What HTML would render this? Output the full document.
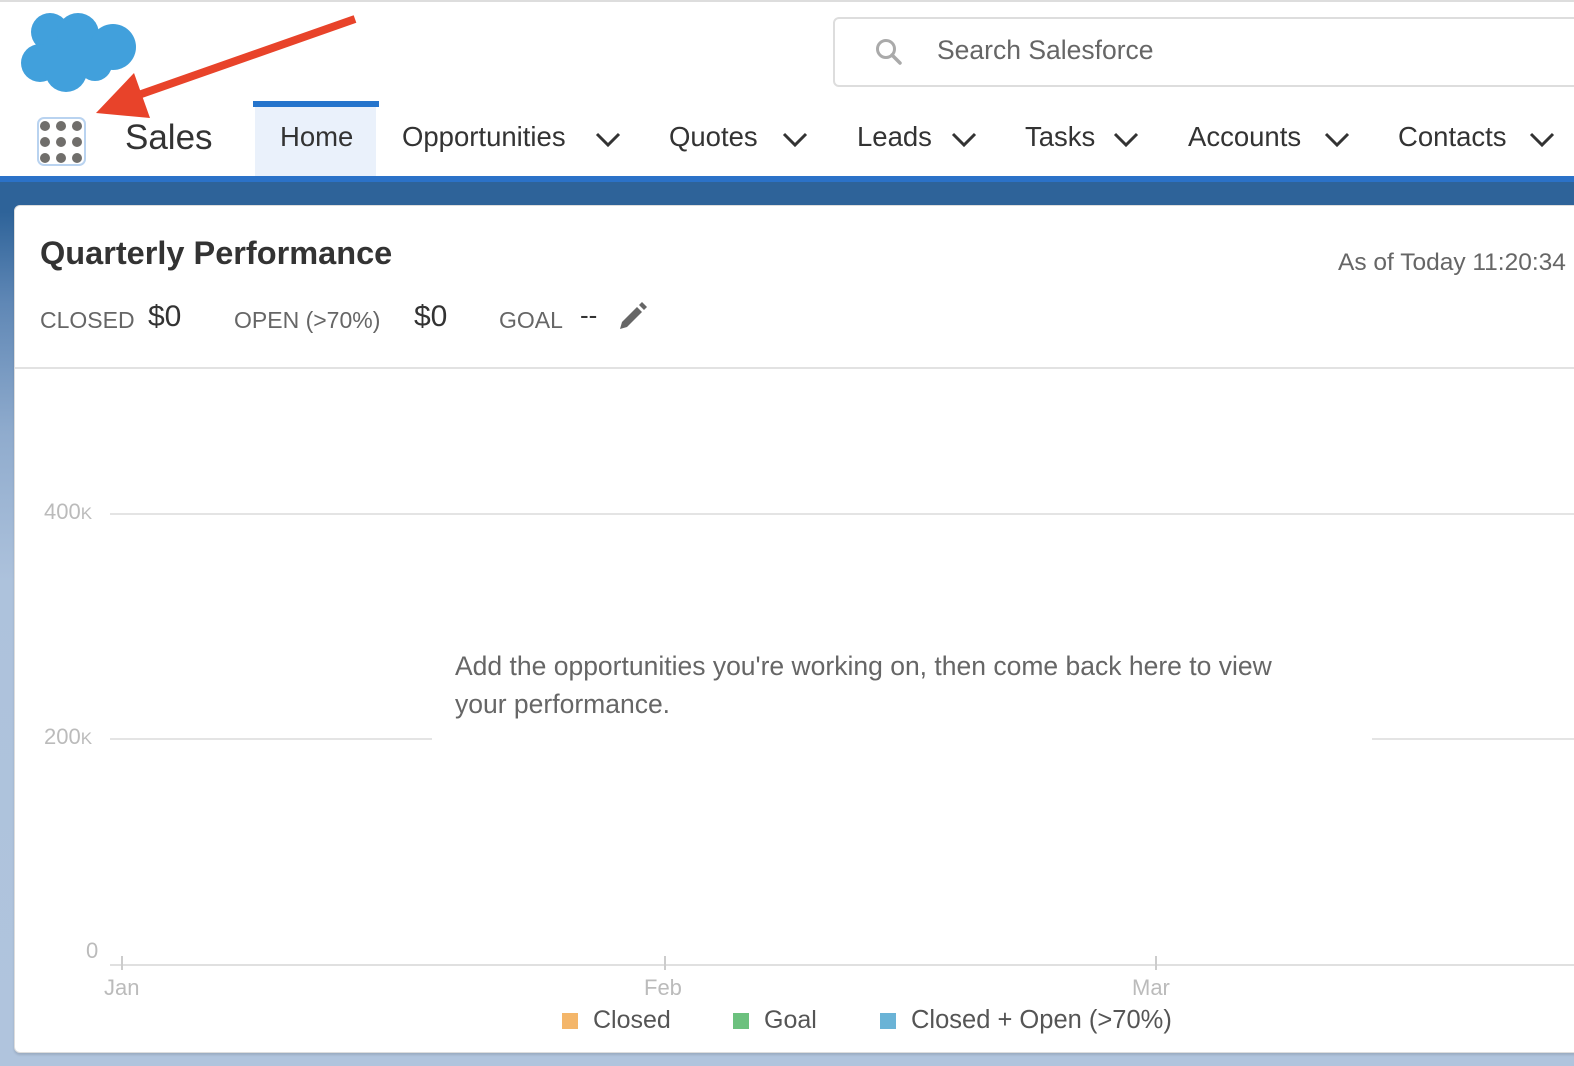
<!DOCTYPE html>
<html><head><meta charset="utf-8"><style>
*{margin:0;padding:0;box-sizing:border-box}
body{width:1574px;height:1066px;overflow:hidden;position:relative;background:#fff;font-family:"Liberation Sans",sans-serif;}
.a{position:absolute;white-space:nowrap}
.nav{font-size:27.5px;color:#333;top:121px}
</style></head><body>
<div class="a" style="left:0;top:0;width:1574px;height:2px;background:#ddd"></div>
<!-- logo -->
<svg class="a" style="left:0;top:0" width="150" height="100">
<g fill="#41a0dc">
<circle cx="50" cy="32" r="19"/><circle cx="78" cy="34" r="21"/><circle cx="113" cy="47" r="23"/>
<circle cx="40" cy="63" r="19"/><circle cx="66" cy="71" r="21"/><circle cx="95" cy="64" r="17"/>
<rect x="45" y="40" width="60" height="30"/></g></svg>
<!-- search -->
<div class="a" style="left:833px;top:17px;width:760px;height:70px;border:2px solid #ddd;border-radius:6px;background:#fff"></div>
<svg class="a" style="left:874px;top:37px" width="30" height="30" viewBox="0 0 30 30"><circle cx="12" cy="12" r="8.5" fill="none" stroke="#aaa" stroke-width="3"/><line x1="18" y1="18" x2="26" y2="26" stroke="#aaa" stroke-width="3.5" stroke-linecap="round"/></svg>
<div class="a" style="left:937px;top:35px;font-size:26.5px;color:#666">Search Salesforce</div>
<!-- launcher -->
<div class="a" style="left:37px;top:117px;width:49px;height:49px;border:2px solid #b9d3f0;border-radius:7px;background:#fff"></div>
<svg class="a" style="left:37px;top:117px" width="49" height="49"><g fill="#706e6b">
<circle cx="8" cy="9" r="5"/><circle cx="24" cy="9" r="5"/><circle cx="40" cy="9" r="5"/>
<circle cx="8" cy="25" r="5"/><circle cx="24" cy="25" r="5"/><circle cx="40" cy="25" r="5"/>
<circle cx="8" cy="41" r="5"/><circle cx="24" cy="41" r="5"/><circle cx="40" cy="41" r="5"/></g></svg>
<div class="a" style="left:125px;top:118px;font-size:35px;color:#333">Sales</div>
<!-- home tab -->
<div class="a" style="left:255px;top:106px;width:121px;height:70px;background:#eaf1fb"></div>
<div class="a" style="left:253px;top:101px;width:126px;height:6px;background:#2574cc"></div>
<div class="a nav" style="left:280px">Home</div>
<div class="a nav" style="left:402px">Opportunities</div>
<div class="a nav" style="left:669px">Quotes</div>
<div class="a nav" style="left:857px">Leads</div>
<div class="a nav" style="left:1025px">Tasks</div>
<div class="a nav" style="left:1188px">Accounts</div>
<div class="a nav" style="left:1398px">Contacts</div>
<svg class="a" style="left:0;top:0" width="1574" height="180"><g fill="none" stroke="#333" stroke-width="3">
<polyline points="597,134 608,145 619,134"/><polyline points="784,134 795,145 806,134"/>
<polyline points="953,134 964,145 975,134"/><polyline points="1115,134 1126,145 1137,134"/>
<polyline points="1326,134 1337,145 1348,134"/><polyline points="1531,134 1542,145 1553,134"/></g></svg>
<!-- arrow -->
<svg class="a" style="left:0;top:0" width="380" height="130"><line x1="355" y1="19" x2="130" y2="98" stroke="#e8432a" stroke-width="8"/><polygon points="96,113 134,73 150,118" fill="#e8432a"/></svg>
<!-- blue band -->
<div class="a" style="left:0;top:176px;width:1574px;height:6px;background:#2b72c8"></div>
<div class="a" style="left:0;top:182px;width:1574px;height:884px;background:linear-gradient(#2e6399 0px,#2e6399 30px,#5f87b5 120px,#8fabcd 250px,#adc2dc 400px,#b0c4dd 884px)"></div>
<!-- card -->
<div class="a" style="left:14px;top:205px;width:1600px;height:848px;background:#fff;border:1px solid #ddd;border-radius:6px;box-shadow:0 2px 2px rgba(0,0,0,.12)"></div>
<div class="a" style="left:40px;top:235px;font-size:32.5px;font-weight:bold;color:#333">Quarterly Performance</div>
<div class="a" style="left:1338px;top:249px;font-size:24.5px;color:#666">As of Today 11:20:34</div>
<div class="a" style="left:40px;top:307px;font-size:23px;color:#666">CLOSED</div>
<div class="a" style="left:148px;top:300px;font-size:30px;color:#333">$0</div>
<div class="a" style="left:234px;top:307px;font-size:23px;color:#666">OPEN (&gt;70%)</div>
<div class="a" style="left:414px;top:300px;font-size:30px;color:#333">$0</div>
<div class="a" style="left:499px;top:307px;font-size:23px;color:#666">GOAL</div>
<div class="a" style="left:580px;top:300px;font-size:26px;color:#333">--</div>
<svg class="a" style="left:617px;top:302px" width="30" height="30" viewBox="0 0 30 30"><path d="M3 27 L5 20 L20 5 L25 10 L10 25 Z" fill="#666"/><path d="M22 3 L25 0 L30 5 L27 8 Z" fill="#666"/></svg>
<div class="a" style="left:15px;top:367px;width:1574px;height:2px;background:#e2e2e2"></div>
<!-- chart -->
<div class="a" style="left:44px;top:499px;font-size:22px;color:#bbb">400<span style="font-size:17px">K</span></div>
<div class="a" style="left:44px;top:724px;font-size:22px;color:#bbb">200<span style="font-size:17px">K</span></div>
<div class="a" style="left:86px;top:938px;font-size:22px;color:#bbb">0</div>
<div class="a" style="left:110px;top:513px;width:1470px;height:2px;background:#e4e4e4"></div>
<div class="a" style="left:110px;top:738px;width:322px;height:2px;background:#e4e4e4"></div>
<div class="a" style="left:1372px;top:738px;width:210px;height:2px;background:#e4e4e4"></div>
<div class="a" style="left:110px;top:964px;width:1470px;height:2px;background:#e0e0e0"></div>
<div class="a" style="left:121px;top:956px;width:2px;height:14px;background:#ccc"></div>
<div class="a" style="left:664px;top:956px;width:2px;height:14px;background:#ccc"></div>
<div class="a" style="left:1155px;top:956px;width:2px;height:14px;background:#ccc"></div>
<div class="a" style="left:104px;top:975px;font-size:22px;color:#bbb">Jan</div>
<div class="a" style="left:644px;top:975px;font-size:22px;color:#bbb">Feb</div>
<div class="a" style="left:1132px;top:975px;font-size:22px;color:#bbb">Mar</div>
<div class="a" style="left:455px;top:647px;font-size:26.5px;color:#666;line-height:38px;white-space:normal;width:870px">Add the opportunities you're working on, then come back here to view your performance.</div>
<div class="a" style="left:562px;top:1013px;width:16px;height:16px;background:#f4b66a"></div>
<div class="a" style="left:593px;top:1006px;font-size:25px;color:#555">Closed</div>
<div class="a" style="left:733px;top:1013px;width:16px;height:16px;background:#6cc17e"></div>
<div class="a" style="left:764px;top:1006px;font-size:25px;color:#555">Goal</div>
<div class="a" style="left:880px;top:1013px;width:16px;height:16px;background:#6ab3d6"></div>
<div class="a" style="left:911px;top:1006px;font-size:25.5px;color:#555">Closed + Open (&gt;70%)</div>
</body></html>
